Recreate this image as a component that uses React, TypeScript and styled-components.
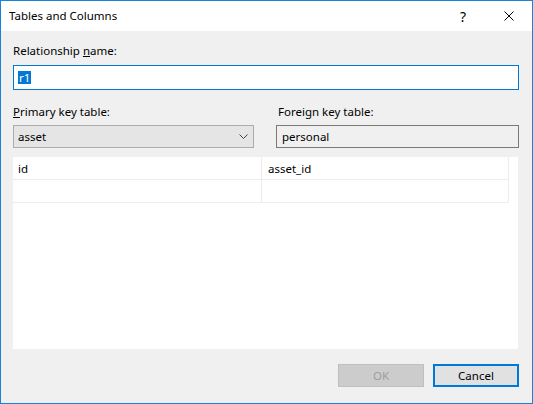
import React from 'react';
import styled, { createGlobalStyle } from 'styled-components';

const GlobalStyle = createGlobalStyle`
  html, body {
    margin: 0;
    padding: 0;
    background: #ffffff;
  }
  body {
    font-family: 'Noto Sans', 'Open Sans', sans-serif;
    font-size: 11.5px;
    color: #000000;
  }
`;

const Window = styled.div`
  width: 533px;
  height: 404px;
  box-sizing: border-box;
  border: 1px solid #1883d7;
  background: #f0f0f0;
  display: flex;
  flex-direction: column;
`;

const TitleBar = styled.div`
  height: 30px;
  background: #ffffff;
  display: flex;
  align-items: center;
  padding-left: 8px;
`;

const Title = styled.div`
  flex: 1;
  line-height: 16px;
`;

const CaptionButton = styled.div`
  width: 46px;
  height: 30px;
  display: flex;
  align-items: center;
  justify-content: center;
  font-size: 14px;
`;

const Body = styled.div`
  flex: 1;
  display: flex;
  flex-direction: column;
  padding: 12px 13px 0 12px;
`;

const Label = styled.div<{ $indent?: number }>`
  line-height: 16px;
  height: 16px;
  padding-left: ${p => p.$indent ?? 0}px;
  white-space: nowrap;
`;

const NameBox = styled.div`
  margin-top: 6px;
  height: 25px;
  box-sizing: border-box;
  border: 1px solid #0078d7;
  background: #ffffff;
  display: flex;
  align-items: center;
  padding-left: 4px;
`;

const Selected = styled.span`
  background: #0078d7;
  color: #ffffff;
  line-height: 13px;
  padding: 0 1px;
`;

const KeyRow = styled.div`
  margin-top: 14px;
  display: grid;
  grid-template-columns: 241px 243px;
  column-gap: 22px;
`;

const Field = styled.div`
  display: flex;
  flex-direction: column;
  gap: 5px;
`;

const Combo = styled.div`
  height: 23px;
  box-sizing: border-box;
  border: 1px solid #acacac;
  background: #e5e5e5;
  display: flex;
  align-items: center;
  justify-content: space-between;
  padding: 0 5px 0 4px;
`;

const ReadOnlyBox = styled.div`
  height: 23px;
  box-sizing: border-box;
  border: 1px solid #7a7a7a;
  background: #f0f0f0;
  display: flex;
  align-items: center;
  padding-left: 5px;
`;

const Grid = styled.div`
  margin-top: 9px;
  width: 505px;
  height: 192px;
  background: #ffffff;
`;

const GridRow = styled.div`
  width: 496px;
  height: 23px;
  box-sizing: border-box;
  display: grid;
  grid-template-columns: 249px 1fr;
  border-bottom: 1px solid #ececec;
  border-right: 1px solid #ececec;
`;

const Cell = styled.div<{ $first?: boolean }>`
  display: flex;
  align-items: center;
  padding-left: ${p => (p.$first ? 5 : 6)}px;
  border-right: ${p => (p.$first ? '1px solid #ececec' : 'none')};
`;

const Footer = styled.div`
  margin-top: 15px;
  display: flex;
  justify-content: flex-end;
  gap: 9px;
`;

const Button = styled.div<{ $disabled?: boolean; $default?: boolean }>`
  width: 86px;
  height: 23px;
  box-sizing: border-box;
  display: flex;
  align-items: center;
  justify-content: center;
  background: ${p => (p.$disabled ? '#cccccc' : '#e1e1e1')};
  color: ${p => (p.$disabled ? '#9e9e9e' : '#000000')};
  border: ${p => (p.$default ? '2px solid #0078d7' : '1px solid #bfbfbf')};
`;

const CloseIcon = () => (
  <svg width="10" height="10" viewBox="0 0 10 10">
    <path d="M0.5 0.5 L9.5 9.5 M9.5 0.5 L0.5 9.5" stroke="#000" strokeWidth="1" fill="none" />
  </svg>
);

const Chevron = () => (
  <svg width="9" height="5" viewBox="0 0 9 5">
    <path d="M0.5 0.5 L4.5 4.5 L8.5 0.5" stroke="#444" strokeWidth="1" fill="none" />
  </svg>
);

const App: React.FC = () => {
  return (
    <>
      <GlobalStyle />
      <Window>
        <TitleBar>
          <Title>Tables and Columns</Title>
          <CaptionButton>?</CaptionButton>
          <CaptionButton>
            <CloseIcon />
          </CaptionButton>
        </TitleBar>
        <Body>
          <Label>
            Relationship <u>n</u>ame:
          </Label>
          <NameBox>
            <Selected>r1</Selected>
          </NameBox>
          <KeyRow>
            <Field>
              <Label>
                <u>P</u>rimary key table:
              </Label>
              <Combo>
                <span>asset</span>
                <Chevron />
              </Combo>
            </Field>
            <Field>
              <Label $indent={2}>Foreign key table:</Label>
              <ReadOnlyBox>personal</ReadOnlyBox>
            </Field>
          </KeyRow>
          <Grid>
            <GridRow>
              <Cell $first>id</Cell>
              <Cell>asset_id</Cell>
            </GridRow>
            <GridRow>
              <Cell $first />
              <Cell />
            </GridRow>
          </Grid>
          <Footer>
            <Button $disabled>OK</Button>
            <Button $default>Cancel</Button>
          </Footer>
        </Body>
      </Window>
    </>
  );
};

export default App;
